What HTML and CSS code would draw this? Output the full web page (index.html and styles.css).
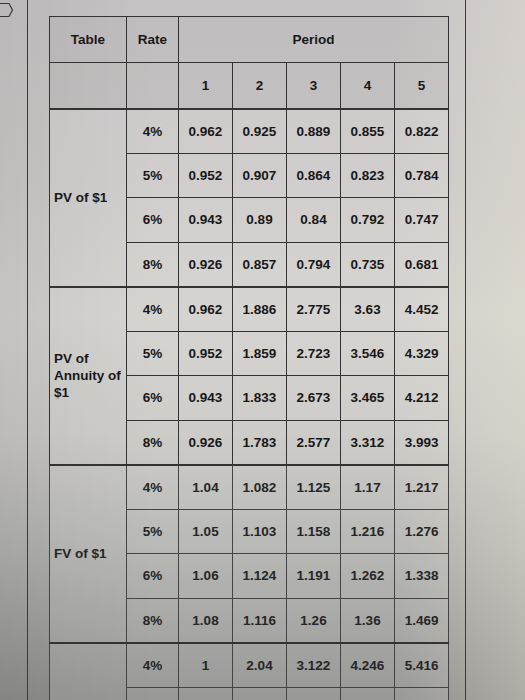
FILE: index.html
```html
<!DOCTYPE html>
<html>
<head>
<meta charset="utf-8">
<link rel="stylesheet" href="styles.css">
</head>
<body>
<div class="screen">
  <div class="gutter">
    <svg class="tag" width="14" height="20" viewBox="0 0 14 20"><path d="M-1 3.5 H9 L12.5 10 L9 16.5 H-1" fill="none" stroke="#3a3839" stroke-width="1.2"/></svg>
  </div>
  <div class="frame">
    <table class="rates">
      <colgroup>
        <col class="c-label"><col class="c-rate"><col class="c-p"><col class="c-p"><col class="c-p"><col class="c-p"><col class="c-p">
      </colgroup>
      <thead>
        <tr class="hrow"><th>Table</th><th>Rate</th><th colspan="5">Period</th></tr>
        <tr class="hrow"><th></th><th></th><th>1</th><th>2</th><th>3</th><th>4</th><th>5</th></tr>
      </thead>
      <tbody class="g1">
        <tr><td class="label" rowspan="4">PV of $1</td><td>4%</td><td>0.962</td><td>0.925</td><td>0.889</td><td>0.855</td><td>0.822</td></tr>
        <tr><td>5%</td><td>0.952</td><td>0.907</td><td>0.864</td><td>0.823</td><td>0.784</td></tr>
        <tr><td>6%</td><td>0.943</td><td>0.89</td><td>0.84</td><td>0.792</td><td>0.747</td></tr>
        <tr><td>8%</td><td>0.926</td><td>0.857</td><td>0.794</td><td>0.735</td><td>0.681</td></tr>
      </tbody>
      <tbody class="g2">
        <tr><td class="label" rowspan="4">PV of<br>Annuity of<br>$1</td><td>4%</td><td>0.962</td><td>1.886</td><td>2.775</td><td>3.63</td><td>4.452</td></tr>
        <tr><td>5%</td><td>0.952</td><td>1.859</td><td>2.723</td><td>3.546</td><td>4.329</td></tr>
        <tr><td>6%</td><td>0.943</td><td>1.833</td><td>2.673</td><td>3.465</td><td>4.212</td></tr>
        <tr><td>8%</td><td>0.926</td><td>1.783</td><td>2.577</td><td>3.312</td><td>3.993</td></tr>
      </tbody>
      <tbody class="g3">
        <tr><td class="label" rowspan="4">FV of $1</td><td>4%</td><td>1.04</td><td>1.082</td><td>1.125</td><td>1.17</td><td>1.217</td></tr>
        <tr><td>5%</td><td>1.05</td><td>1.103</td><td>1.158</td><td>1.216</td><td>1.276</td></tr>
        <tr><td>6%</td><td>1.06</td><td>1.124</td><td>1.191</td><td>1.262</td><td>1.338</td></tr>
        <tr><td>8%</td><td>1.08</td><td>1.116</td><td>1.26</td><td>1.36</td><td>1.469</td></tr>
      </tbody>
      <tbody class="g4">
        <tr><td class="label" rowspan="2"></td><td>4%</td><td>1</td><td>2.04</td><td>3.122</td><td>4.246</td><td>5.416</td></tr>
        <tr><td></td><td></td><td></td><td></td><td></td><td></td></tr>
      </tbody>
    </table>
  </div>
</div>
</body>
</html>
```
FILE: styles.css
```css
html, body {
  margin: 0;
  padding: 0;
  width: 525px;
  height: 700px;
  overflow: hidden;
}
body {
  font-family: "Liberation Sans", Arial, sans-serif;
  background:
    linear-gradient(to right, rgba(0,0,0,0.06) 0%, rgba(0,0,0,0) 30%, rgba(0,0,0,0) 75%, rgba(235,230,212,0.35) 100%),
    linear-gradient(to bottom, #c7c3c5 0%, #cbc8c7 25%, #d2d0cc 45%, #c8c7c3 62%, #b1b1ae 78%, #8d8d8b 100%);
}
.screen {
  display: flex;
  height: 700px;
}
.gutter {
  width: 27px;
  flex: none;
}
.tag {
  display: block;
}
.frame {
  width: 439px;
  flex: none;
  border-left: 1px solid #3b3a3a;
  border-right: 1px solid #3b3a3a;
  padding-top: 16px;
  padding-left: 21px;
  box-sizing: border-box;
}
.rates {
  border-collapse: collapse;
  table-layout: fixed;
  width: 400px;
  color: #181818;
  font-size: 13.5px;
  font-weight: bold;
}
.c-label { width: 77px; }
.c-rate { width: 52px; }
.c-p { width: 54px; }
.rates th, .rates td {
  border: 1px solid #333;
  padding: 0;
  text-align: center;
  vertical-align: middle;
}
.rates th {
  background: rgba(120,112,116,0.07);
  font-weight: bold;
}
.hrow { height: 46px; }
.rates tbody tr { height: 44.5px; }
.rates td { background: rgba(255,255,255,0.1); }
.rates tbody tr:first-child td { border-top: 2px solid #333; }
.rates td.label {
  text-align: left;
  padding-left: 4px;
  line-height: 17px;
}
.g3 td, .g4 td { color: #262626; border-color: #444; }
```
